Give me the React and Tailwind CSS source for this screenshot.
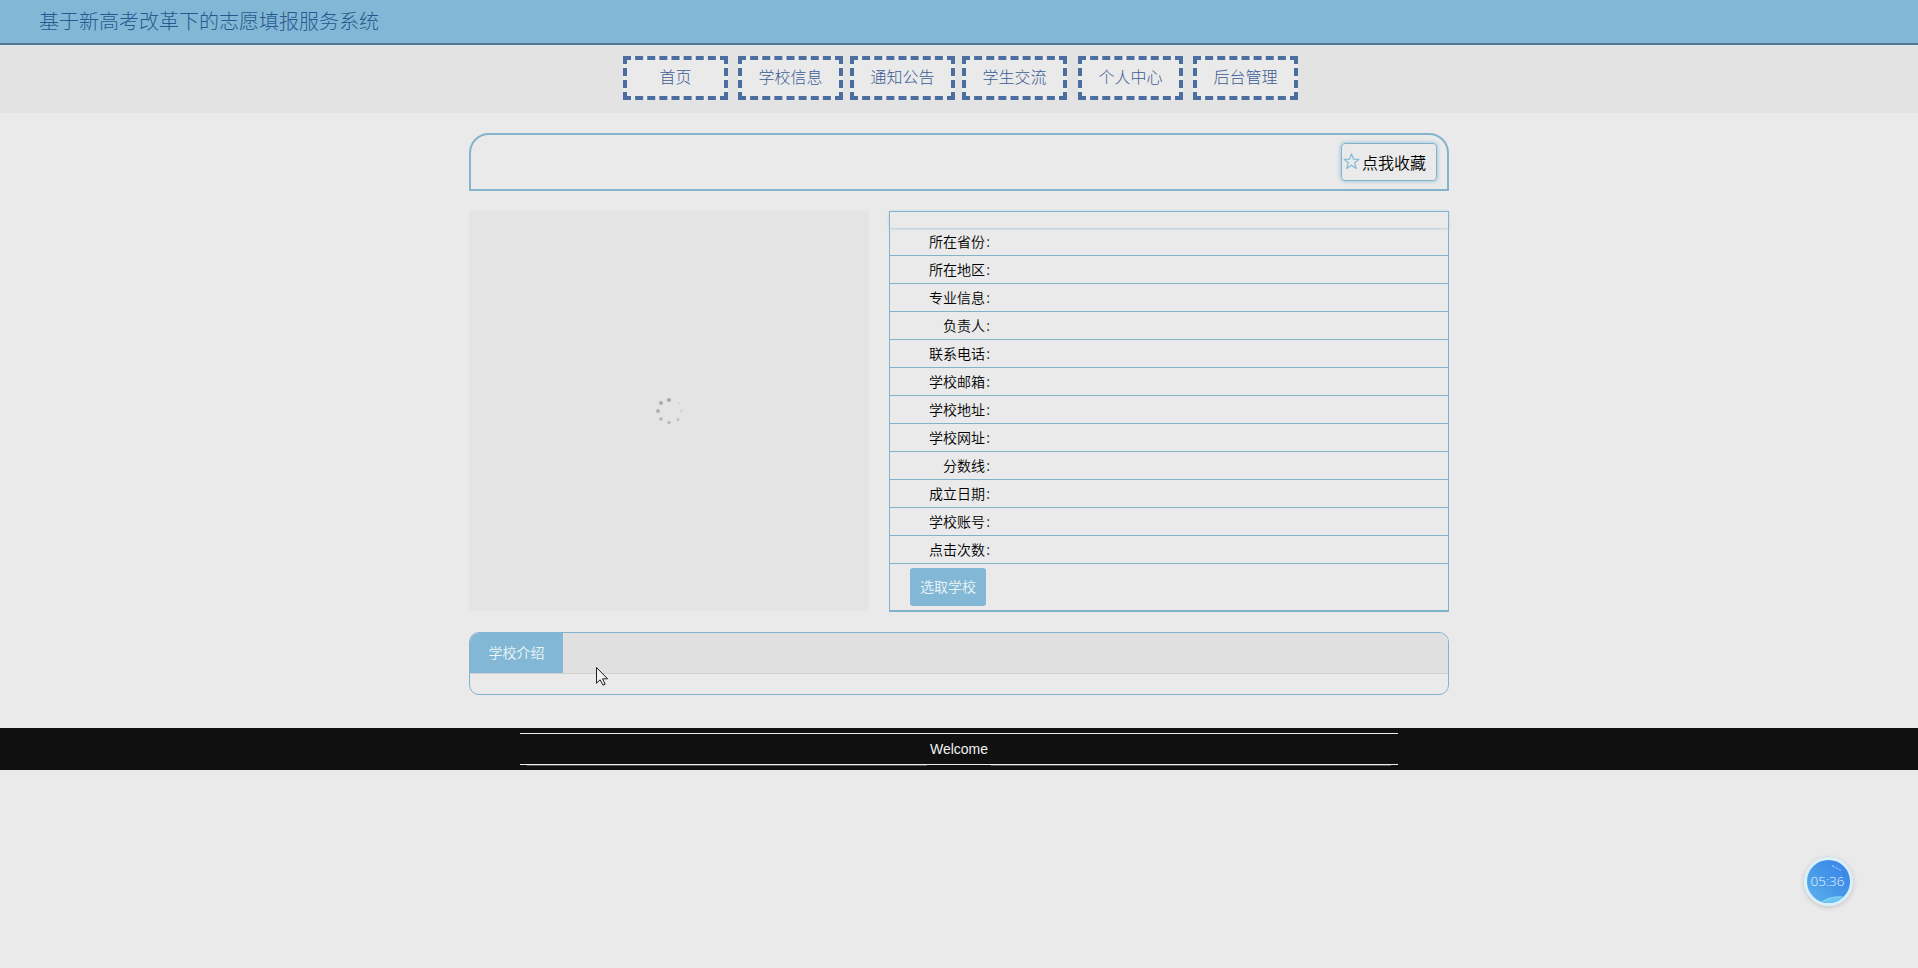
const navItems = [
  { label: '首页', gap: '' },
  { label: '学校信息', gap: 'ml-[10px]' },
  { label: '通知公告', gap: 'ml-[7px]' },
  { label: '学生交流', gap: 'ml-[7px]' },
  { label: '个人中心', gap: 'ml-[11px]' },
  { label: '后台管理', gap: 'ml-[10px]' },
];

const fields = [
  '所在省份', '所在地区', '专业信息', '负责人', '联系电话', '学校邮箱',
  '学校地址', '学校网址', '分数线', '成立日期', '学校账号', '点击次数',
];

const spinnerDots = [
  [14, 3, 2.1, 0.42], [6, 6, 2.1, 0.38], [3, 14, 1.9, 0.38], [6, 22, 1.8, 0.32],
  [14, 25.5, 1.7, 0.3], [23, 22.5, 1.5, 0.24], [26.5, 14, 1.2, 0.18], [24, 6.5, 1, 0.16],
];

function Spinner() {
  return (
    <svg className="h-7 w-7" viewBox="0 0 28 28" fill="#555">
      {spinnerDots.map(([cx, cy, r, o]) => (
        <circle key={`${cx}-${cy}`} cx={cx} cy={cy} r={r} opacity={o} />
      ))}
    </svg>
  );
}

function Star() {
  return (
    <svg className="ml-px h-[17px] w-[17px] shrink-0" viewBox="0 0 16 16" fill="none" stroke="#83b8d6" strokeWidth="1.1" strokeLinejoin="round">
      <path d="M8 0.8 L9.8 5.7 L15 6 L11 9.2 L12.4 14.5 L8 11.5 L3.6 14.5 L5 9.2 L1 6 L6.2 5.7 Z" />
    </svg>
  );
}

function Cursor() {
  return (
    <svg className="absolute left-[595px] top-[666px] h-[21px] w-[14px]" viewBox="0 0 14 21" fill="#f0f0f0" stroke="#222" strokeWidth="1">
      <path d="M1.5 1.5 V17.2 L5.2 13.8 L8 19.2 L10.2 18.2 L7.6 12.8 H12.6 Z" />
    </svg>
  );
}

function Clock() {
  return (
    <div className="absolute left-[1804px] top-[857px] flex h-[49px] w-[49px] items-center justify-center overflow-hidden rounded-full border-[3px] border-[#d9effa] bg-linear-to-tr from-[#5fb4ea] via-[#4697e8] to-[#3a80ea] shadow-[0_1px_5px_rgba(0,0,0,0.18)]">
      <svg className="absolute inset-0 h-full w-full" viewBox="0 0 43 43" fill="none">
        <path d="M12 43 Q22 35 38 37 L32 43 Z" fill="#6fc6f2" />
        <path d="M17 41 Q25 36 36 37" stroke="#9adcf8" strokeWidth=".8" />
        <path d="M25 5.5 L34 10.5" stroke="#a9d2fa" strokeWidth="1" strokeDasharray="3 1" />
        <path d="M34 10.5 Q37 13 38 17" stroke="#347ce0" strokeWidth="1" />
      </svg>
      <span className="relative right-px font-['Open_Sans',sans-serif] text-[13.5px] leading-none text-[#e9f7ff]">05:36</span>
    </div>
  );
}

export default function App() {
  return (
    <div className="relative h-[968px] w-full overflow-hidden bg-[#eaeaea] font-['Noto_Sans_CJK_SC',sans-serif] text-sm font-[350] text-black">
      <header className="flex h-[45px] items-center border-b-2 border-[#4d7896] bg-[#82b8d5] pb-[2px] pl-[39px] text-xl font-light text-[#28588f]">
        <h1 className="leading-none">基于新高考改革下的志愿填报服务系统</h1>
      </header>

      <nav className="flex h-[68px] bg-[#e3e3e3] pl-[623px] pt-[11px] text-base font-light text-[#3c5c94]">
        {navItems.map((item) => (
          <a key={item.label} className={`flex h-11 w-[105px] items-center justify-center border-4 border-dashed border-[#4c6d9f] bg-[#eaeaea] pb-1 leading-none ${item.gap}`}>
            {item.label}
          </a>
        ))}
      </nav>

      <main className="ml-[469px] flex w-[980px] flex-col pt-5">
        <section className="flex h-[58px] justify-end rounded-t-[20px] border-2 border-[#83b4cc] pr-[10px] pt-2">
          <button className="flex h-[38px] w-24 items-center rounded border border-[#82b3cc] pb-px text-base font-[350] text-black shadow-[0_0_4px_#82b8d5]">
            <Star />
            <span className="ml-[2px] whitespace-nowrap leading-none">点我收藏</span>
          </button>
        </section>

        <div className="mt-5 flex gap-5">
          <div className="flex h-[400px] w-[400px] items-center justify-center bg-[#e4e4e4]">
            <Spinner />
          </div>
          <section className="h-[401px] w-[560px] border border-b-2 border-[#82b2c9]">
            <div className="h-4 shadow-[0_0_3px_#82b8d5]" />
            {fields.map((field) => (
              <div key={field} className="flex h-7 items-center border-b border-[#82b2c9] pb-[2px] pl-5">
                <span className="flex w-20 justify-end whitespace-nowrap leading-none">
                  {field}
                  <span className="w-[5px] text-right">:</span>
                </span>
              </div>
            ))}
            <div className="pl-5 pt-1">
              <button className="flex h-[38px] w-[76px] items-center justify-center rounded-[3px] bg-[#82b8d5] pb-[2px] leading-none text-[#edf5f8]">选取学校</button>
            </div>
          </section>
        </div>

        <section className="mt-5 h-[63px] overflow-hidden rounded-[10px] border border-[#82b4cf]">
          <div className="flex h-[41px] border-b border-[#d0d0d0] bg-[#e0e0e0]">
            <div className="flex h-10 w-[93px] items-center justify-center bg-[#82b8d5] pb-[2px] leading-none text-[#edf5f8]">学校介绍</div>
          </div>
        </section>
      </main>

      <footer className="mt-[33px] flex h-[42px] flex-col items-center bg-[#101010] pt-[5px]">
        <div className="flex h-8 w-[878px] items-center justify-center border-y border-[#ededed] font-['Liberation_Sans',Arial,sans-serif] text-sm font-normal leading-none text-[#f0f0f0]">Welcome</div>
        <div className="flex h-px w-[864px] justify-between">
          <div className="w-[400px] bg-[#555]" />
          <div className="w-[400px] bg-[#555]" />
        </div>
      </footer>

      <Cursor />
      <Clock />
    </div>
  );
}
